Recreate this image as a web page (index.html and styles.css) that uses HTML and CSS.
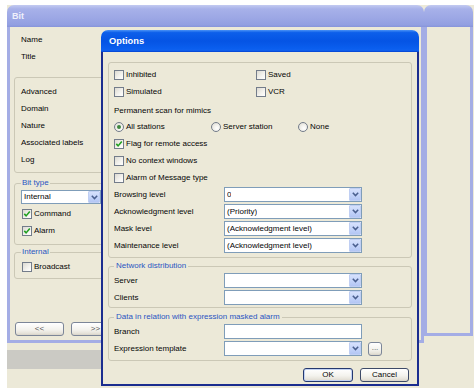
FILE: index.html
```html
<!DOCTYPE html>
<html lang="en">
<head>
<meta charset="utf-8">
<title>Options</title>
<link rel="stylesheet" href="styles.css">
</head>
<body>
<div class="desk">
  <div class="backdrop"><div class="statusband"></div></div>

  <div class="win win-side">
    <div class="tb tb-inactive"></div>
    <div class="wbody wbody-inactive"></div>
  </div>

  <div class="win win-bit">
    <div class="tb tb-inactive"><span class="tb-title">Bit</span></div>
    <div class="wbody wbody-inactive bit-body">
      <div class="lrow lrow-top">Name</div>
      <div class="lrow lrow-top">Title</div>
      <div class="gbox adv">
        <div class="lrow">Advanced</div>
        <div class="lrow">Domain</div>
        <div class="lrow">Nature</div>
        <div class="lrow">Associated labels</div>
        <div class="lrow">Log</div>
      </div>
      <fieldset class="gbox bittype">
        <legend>Bit type</legend>
        <div class="sel sel-sm"><span class="sel-val">Internal</span><span class="sel-btn"><svg width="7" height="5" viewBox="0 0 7 5"><polyline points="0.8,0.8 3.5,3.6 6.2,0.8" fill="none" stroke="#4a5f8e" stroke-width="1.5"/></svg></span></div>
        <div class="crow"><span class="cb"><svg width="8" height="8" viewBox="0 0 8 8"><polyline points="1.3,3.9 3.1,5.9 6.8,1.6" fill="none" stroke="#22a022" stroke-width="1.6"/></svg></span>Command</div>
        <div class="crow"><span class="cb"><svg width="8" height="8" viewBox="0 0 8 8"><polyline points="1.3,3.9 3.1,5.9 6.8,1.6" fill="none" stroke="#22a022" stroke-width="1.6"/></svg></span>Alarm</div>
      </fieldset>
      <fieldset class="gbox internal">
        <legend>Internal</legend>
        <div class="crow"><span class="cb"></span>Broadcast</div>
      </fieldset>
      <div class="navbtns">
        <span class="btn btn-nav">&lt;&lt;</span>
        <span class="btn btn-nav">&gt;&gt;</span>
      </div>
    </div>
  </div>

  <div class="win win-opt">
    <div class="tb tb-active"><span class="tb-title">Options</span></div>
    <div class="wbody wbody-active opt-body">
      <div class="gbox mainbox">
        <div class="cbgrid">
          <div class="crow"><span class="cb"></span>Inhibited</div>
          <div class="crow"><span class="cb"></span>Saved</div>
          <div class="crow"><span class="cb"></span>Simulated</div>
          <div class="crow"><span class="cb"></span>VCR</div>
        </div>
        <div class="perm">Permanent scan for mimics</div>
        <div class="radios">
          <div class="crow"><span class="rb on"></span>All stations</div>
          <div class="crow"><span class="rb"></span>Server station</div>
          <div class="crow"><span class="rb"></span>None</div>
        </div>
        <div class="crow"><span class="cb"><svg width="8" height="8" viewBox="0 0 8 8"><polyline points="1.3,3.9 3.1,5.9 6.8,1.6" fill="none" stroke="#22a022" stroke-width="1.6"/></svg></span>Flag for remote access</div>
        <div class="crow"><span class="cb"></span>No context windows</div>
        <div class="crow"><span class="cb"></span>Alarm of Message type</div>
        <div class="fields">
          <div class="frow"><span>Browsing level</span><div class="sel"><span class="sel-val">0</span><span class="sel-btn"><svg width="7" height="5" viewBox="0 0 7 5"><polyline points="0.8,0.8 3.5,3.6 6.2,0.8" fill="none" stroke="#4a5f8e" stroke-width="1.5"/></svg></span></div></div>
          <div class="frow"><span>Acknowledgment level</span><div class="sel"><span class="sel-val">(Priority)</span><span class="sel-btn"><svg width="7" height="5" viewBox="0 0 7 5"><polyline points="0.8,0.8 3.5,3.6 6.2,0.8" fill="none" stroke="#4a5f8e" stroke-width="1.5"/></svg></span></div></div>
          <div class="frow"><span>Mask level</span><div class="sel"><span class="sel-val">(Acknowledgment level)</span><span class="sel-btn"><svg width="7" height="5" viewBox="0 0 7 5"><polyline points="0.8,0.8 3.5,3.6 6.2,0.8" fill="none" stroke="#4a5f8e" stroke-width="1.5"/></svg></span></div></div>
          <div class="frow"><span>Maintenance level</span><div class="sel"><span class="sel-val">(Acknowledgment level)</span><span class="sel-btn"><svg width="7" height="5" viewBox="0 0 7 5"><polyline points="0.8,0.8 3.5,3.6 6.2,0.8" fill="none" stroke="#4a5f8e" stroke-width="1.5"/></svg></span></div></div>
        </div>
      </div>

      <fieldset class="gbox net">
        <legend>Network distribution</legend>
        <div class="frow"><span>Server</span><div class="sel"><span class="sel-val"></span><span class="sel-btn"><svg width="7" height="5" viewBox="0 0 7 5"><polyline points="0.8,0.8 3.5,3.6 6.2,0.8" fill="none" stroke="#4a5f8e" stroke-width="1.5"/></svg></span></div></div>
        <div class="frow"><span>Clients</span><div class="sel"><span class="sel-val"></span><span class="sel-btn"><svg width="7" height="5" viewBox="0 0 7 5"><polyline points="0.8,0.8 3.5,3.6 6.2,0.8" fill="none" stroke="#4a5f8e" stroke-width="1.5"/></svg></span></div></div>
      </fieldset>

      <fieldset class="gbox data">
        <legend>Data in relation with expression masked alarm</legend>
        <div class="frow"><span>Branch</span><div class="txt"></div></div>
        <div class="frow"><span>Expression template</span><div class="sel"><span class="sel-val"></span><span class="sel-btn"><svg width="7" height="5" viewBox="0 0 7 5"><polyline points="0.8,0.8 3.5,3.6 6.2,0.8" fill="none" stroke="#4a5f8e" stroke-width="1.5"/></svg></span></div><span class="btn btn-dots">...</span></div>
      </fieldset>

      <div class="dlg-btns">
        <span class="btn btn-default">OK</span>
        <span class="btn btn-cancel">Cancel</span>
      </div>
    </div>
  </div>
</div>
</body>
</html>
```

FILE: styles.css
```css
* { box-sizing: border-box; }

html, body { margin: 0; padding: 0; }

body {
  width: 474px;
  height: 392px;
  overflow: hidden;
  background: #ffffff;
  font-family: "Liberation Sans", Arial, sans-serif;
  font-size: 8px;
  line-height: 10px;
  color: #050505;
}

.desk {
  position: relative;
  width: 474px;
  height: 392px;
}

/* parent application area behind the windows */
.backdrop {
  position: absolute;
  left: 7px;
  top: 5px;
  width: 467px;
  height: 383px;
  background: #ece9d8;
  display: flex;
  flex-direction: column;
  justify-content: flex-end;
  padding-bottom: 19px;
}

.statusband {
  width: 412px;
  height: 19px;
  background: #cbcac4;
}

/* windows */
.win {
  position: absolute;
  display: flex;
  flex-direction: column;
}

.win-bit  { left: 7px;   top: 5px;  width: 417px; height: 338px; }
.win-side { left: 424px; top: 5px;  width: 49px;  height: 331px; }
.win-opt  { left: 101px; top: 30px; width: 318px; height: 356px; }

.tb {
  flex: none;
  height: 22px;
  border-radius: 7px 7px 0 0;
  display: flex;
  align-items: center;
  padding-left: 5px;
}

.tb-inactive {
  background: linear-gradient(180deg, #c3caf1 0%, #a7b1e9 18%, #9ca7e5 60%, #929fe1 90%, #8794da 100%);
}

.tb-active {
  padding-left: 8px;
  background: linear-gradient(180deg, #4a92f6 0%, #0d5fea 12%, #0554e4 50%, #0a5eee 84%, #0f62f0 92%, #0340cf 100%);
}

.tb-title {
  font-weight: bold;
  font-size: 9px;
  color: #eef0fb;
}

.tb-active .tb-title {
  font-size: 9.3px;
  color: #ffffff;
}

.wbody {
  flex: 1;
  background: #ece9d8;
}

.wbody-inactive {
  border: 3px solid #a4ade5;
  border-top: 0;
}

.wbody-active {
  border: 2px solid #1b2d8f;
  border-top: 0;
}

/* group boxes */
.gbox {
  margin: 0;
  border: 1px solid #cbc8b6;
  border-radius: 3px;
  min-width: 0;
}

legend {
  padding: 0 1px;
  line-height: 10px;
  color: #2a55c2;
}

/* Bit window */
.bit-body {
  display: flex;
  flex-direction: column;
  padding: 4px 4px 4px 4px;
}

.lrow {
  height: 17px;
  display: flex;
  align-items: center;
}

.lrow-top { padding-left: 7px; }

.adv {
  margin-top: 12px;
  padding: 5px 6px 4px;
}

.bittype {
  margin-top: 5px;
  padding: 2px 6px 5px;
}

.internal {
  margin-top: 2px;
  padding: 1px 6px 3px;
}

.bittype .crow,
.internal .crow { padding-left: 1px; }

.bittype .sel-sm { margin-bottom: 1px; }

.navbtns {
  margin-top: auto;
  display: flex;
  gap: 7px;
  padding-left: 1px;
}

/* checkbox / radio rows */
.crow {
  height: 17px;
  display: flex;
  align-items: center;
  gap: 2px;
  white-space: nowrap;
}

.cb {
  flex: none;
  width: 10px;
  height: 10px;
  border: 1px solid #737c8a;
  background: linear-gradient(135deg, #dcdad2 0%, #f4f3ef 60%, #ffffff 100%);
  display: flex;
  align-items: center;
  justify-content: center;
}

.rb {
  flex: none;
  width: 10px;
  height: 10px;
  border-radius: 50%;
  border: 1px solid #737c8a;
  background: radial-gradient(circle at 62% 66%, #ffffff 0%, #f1f0eb 45%, #d9d7cf 100%);
  display: flex;
  align-items: center;
  justify-content: center;
}

.rb.on::after {
  content: "";
  width: 4px;
  height: 4px;
  border-radius: 50%;
  background: #3f873f;
}

/* selects and inputs */
.sel {
  height: 15px;
  border: 1px solid #7f9db9;
  background: #ffffff;
  display: flex;
  align-items: center;
  justify-content: space-between;
  padding-left: 2px;
  white-space: nowrap;
  overflow: hidden;
}

.sel-sm {
  width: 80px;
  height: 14px;
}

.sel-val { overflow: hidden; }

.sel-btn {
  flex: none;
  width: 12px;
  height: 100%;
  border: 1px solid #c0cff3;
  border-radius: 1px;
  background: linear-gradient(180deg, #d6e1fc 0%, #c3d3f9 55%, #b3c6f4 100%);
  display: flex;
  align-items: center;
  justify-content: center;
}

.txt {
  height: 15px;
  border: 1px solid #7f9db9;
  background: #ffffff;
}

/* Options dialog */
.opt-body {
  display: flex;
  flex-direction: column;
  padding: 10px 5px 0;
}

.mainbox {
  padding: 3px 5px 4px;
}

.cbgrid {
  display: grid;
  grid-template-columns: 142px 1fr;
}

.perm {
  margin-top: 4px;
  height: 14px;
  display: flex;
  align-items: center;
}

.radios {
  display: grid;
  grid-template-columns: 97px 87px 1fr;
}

.fields {
  margin-top: 1px;
  display: flex;
  flex-direction: column;
  gap: 2px;
}

.frow {
  display: grid;
  grid-template-columns: 110px 138px auto;
  align-items: center;
  height: 15px;
  white-space: nowrap;
}

.fields .sel { padding-left: 2px; }

.net {
  margin-top: 3px;
  padding: 2px 5px 2px;
  display: flex;
  flex-direction: column;
  gap: 2px;
}

.net legend,
.data legend { padding: 0 2px; }

.data {
  margin-top: 4px;
  padding: 2px 5px 4px;
  display: flex;
  flex-direction: column;
  gap: 2px;
}

/* buttons */
.btn {
  display: flex;
  align-items: center;
  justify-content: center;
  height: 14px;
  border: 1px solid #3d4a68;
  border-radius: 3px;
  background: linear-gradient(180deg, #ffffff 0%, #f4f3ee 55%, #e6e3da 85%, #d8d3c7 100%);
  color: #050505;
}

.btn-nav {
  width: 49px;
  border-color: #7c8698;
  color: #555555;
}

.btn-dots {
  width: 14px;
  height: 14px;
  margin-left: 6px;
  border-color: #7c8698;
  line-height: 8px;
  align-items: flex-end;
  padding-bottom: 3px;
  color: #555555;
}

.dlg-btns {
  margin-top: 7px;
  display: flex;
  justify-content: flex-end;
  gap: 7px;
  padding-right: 3px;
}

.btn-default {
  width: 50px;
  border-color: #24386f;
  box-shadow: inset 0 0 0 1px #c2d2f2;
}

.btn-cancel {
  width: 49px;
}
```
